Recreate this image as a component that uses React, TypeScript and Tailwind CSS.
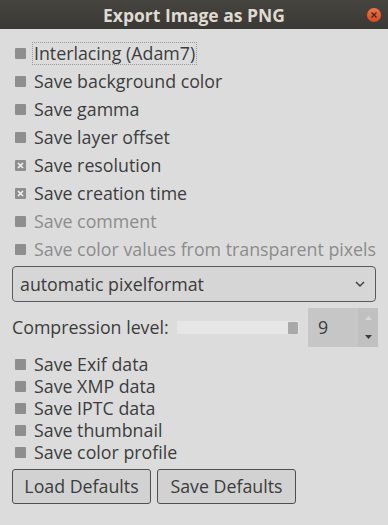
import React from 'react'

const font = { fontFamily: '"Open Sans", "DejaVu Sans", sans-serif' }

const Box = ({ checked }: { checked?: boolean }) => (
    <div className="w-[11px] h-[11px] bg-[#8e8e8e] rounded-[1px] flex items-center justify-center shrink-0">
        {checked && (
            <svg width="7" height="7" viewBox="0 0 7 7">
                <path d="M1 1 L6 6 M6 1 L1 6" stroke="#f2f2f2" strokeWidth="1.6" />
            </svg>
        )}
    </div>
)

const Check = ({ label, checked, disabled, focus, h }: { label: string, checked?: boolean, disabled?: boolean, focus?: boolean, h: string }) => (
    <div className={`flex items-center gap-[8px] pl-[15px] ${h}`}>
        <Box checked={checked} />
        <span className={`text-[17.8px] leading-[21px] whitespace-nowrap ${disabled ? 'text-[#8c8c8c]' : 'text-[#3c3c3c]'} ${focus ? 'outline outline-1 outline-dotted outline-[#9a9a9a] px-[1px] -ml-[1px]' : ''}`}>
            {label}
        </span>
    </div>
)

const App = () => {
    return (
        <div className="w-[388px] h-[525px] bg-[#dcdcdc] flex flex-col overflow-hidden" style={font}>
            <div className="h-[29px] bg-gradient-to-b from-[#45443f] to-[#3a3935] flex items-center justify-center relative shrink-0">
                <span className="text-[#dfdbd2] font-bold text-[17.5px] leading-[22px]">Export Image as PNG</span>
                <div className="absolute right-[7px] top-[8px] w-[14px] h-[14px] rounded-full bg-gradient-to-b from-[#f2734a] to-[#d9491d] flex items-center justify-center">
                    <svg width="6" height="6" viewBox="0 0 6 6">
                        <path d="M0.5 0.5 L5.5 5.5 M5.5 0.5 L0.5 5.5" stroke="#3a2a20" strokeWidth="1.3" />
                    </svg>
                </div>
            </div>

            <div className="flex flex-col pt-[10px]">
                <Check h="h-[28px]" label="Interlacing (Adam7)" focus />
                <Check h="h-[28px]" label="Save background color" />
                <Check h="h-[28px]" label="Save gamma" />
                <Check h="h-[28px]" label="Save layer offset" />
                <Check h="h-[28px]" label="Save resolution" checked />
                <Check h="h-[28px]" label="Save creation time" checked />
                <Check h="h-[28px]" label="Save comment" disabled />
                <Check h="h-[28px]" label="Save color values from transparent pixels" disabled />
            </div>

            <div className="mx-[12px] mt-[3px] h-[36px] border border-[#5a5a5a] rounded-[4px] bg-[#d6d6d6] flex items-center justify-between pl-[7px] pr-[10px]">
                <span className="text-[17.8px] leading-[21px] text-[#3c3c3c]">automatic pixelformat</span>
                <svg width="10" height="6" viewBox="0 0 10 6">
                    <path d="M1 1 L5 5 L9 1" stroke="#3c3c3c" strokeWidth="1.4" fill="none" />
                </svg>
            </div>

            <div className="flex items-center pl-[12px] mt-[6px] h-[39px]">
                <span className="text-[17.8px] leading-[21px] text-[#3c3c3c] w-[165px] whitespace-nowrap">Compression level:</span>
                <div className="w-[122px] h-[13px] bg-[#e6e6e6] flex justify-end items-center pr-[1px]">
                    <div className="w-[10px] h-[12px] bg-[#a9a9a9] rounded-[1px]" />
                </div>
                <div className="ml-[9px] w-[70px] h-[39px] bg-[#c6c6c6] flex">
                    <div className="flex-1 flex items-center pl-[10px] text-[17.8px] text-[#3c3c3c]">9</div>
                    <div className="w-[20px] flex flex-col bg-[#c0c0c0]">
                        <div className="flex-1 flex items-center justify-center">
                            <svg width="7" height="4" viewBox="0 0 7 4"><path d="M0 4 L3.5 0 L7 4 Z" fill="#d8d8d8" /></svg>
                        </div>
                        <div className="flex-1 flex items-center justify-center">
                            <svg width="7" height="4" viewBox="0 0 7 4"><path d="M0 0 L3.5 4 L7 0 Z" fill="#3c3c3c" /></svg>
                        </div>
                    </div>
                </div>
            </div>

            <div className="flex flex-col mt-[6px]">
                <Check h="h-[22px]" label="Save Exif data" />
                <Check h="h-[22px]" label="Save XMP data" />
                <Check h="h-[22px]" label="Save IPTC data" />
                <Check h="h-[22px]" label="Save thumbnail" />
                <Check h="h-[22px]" label="Save color profile" />
            </div>

            <div className="flex gap-[6px] px-[12px] mt-[6px]">
                <div className="w-[139px] h-[35px] border border-[#4f4f4f] rounded-[3px] bg-[#d2d2d2] flex items-center justify-center text-[17.8px] text-[#3c3c3c]">Load Defaults</div>
                <div className="w-[139px] h-[35px] border border-[#4f4f4f] rounded-[3px] bg-[#d2d2d2] flex items-center justify-center text-[17.8px] text-[#3c3c3c]">Save Defaults</div>
            </div>
        </div>
    )
}

export default App
